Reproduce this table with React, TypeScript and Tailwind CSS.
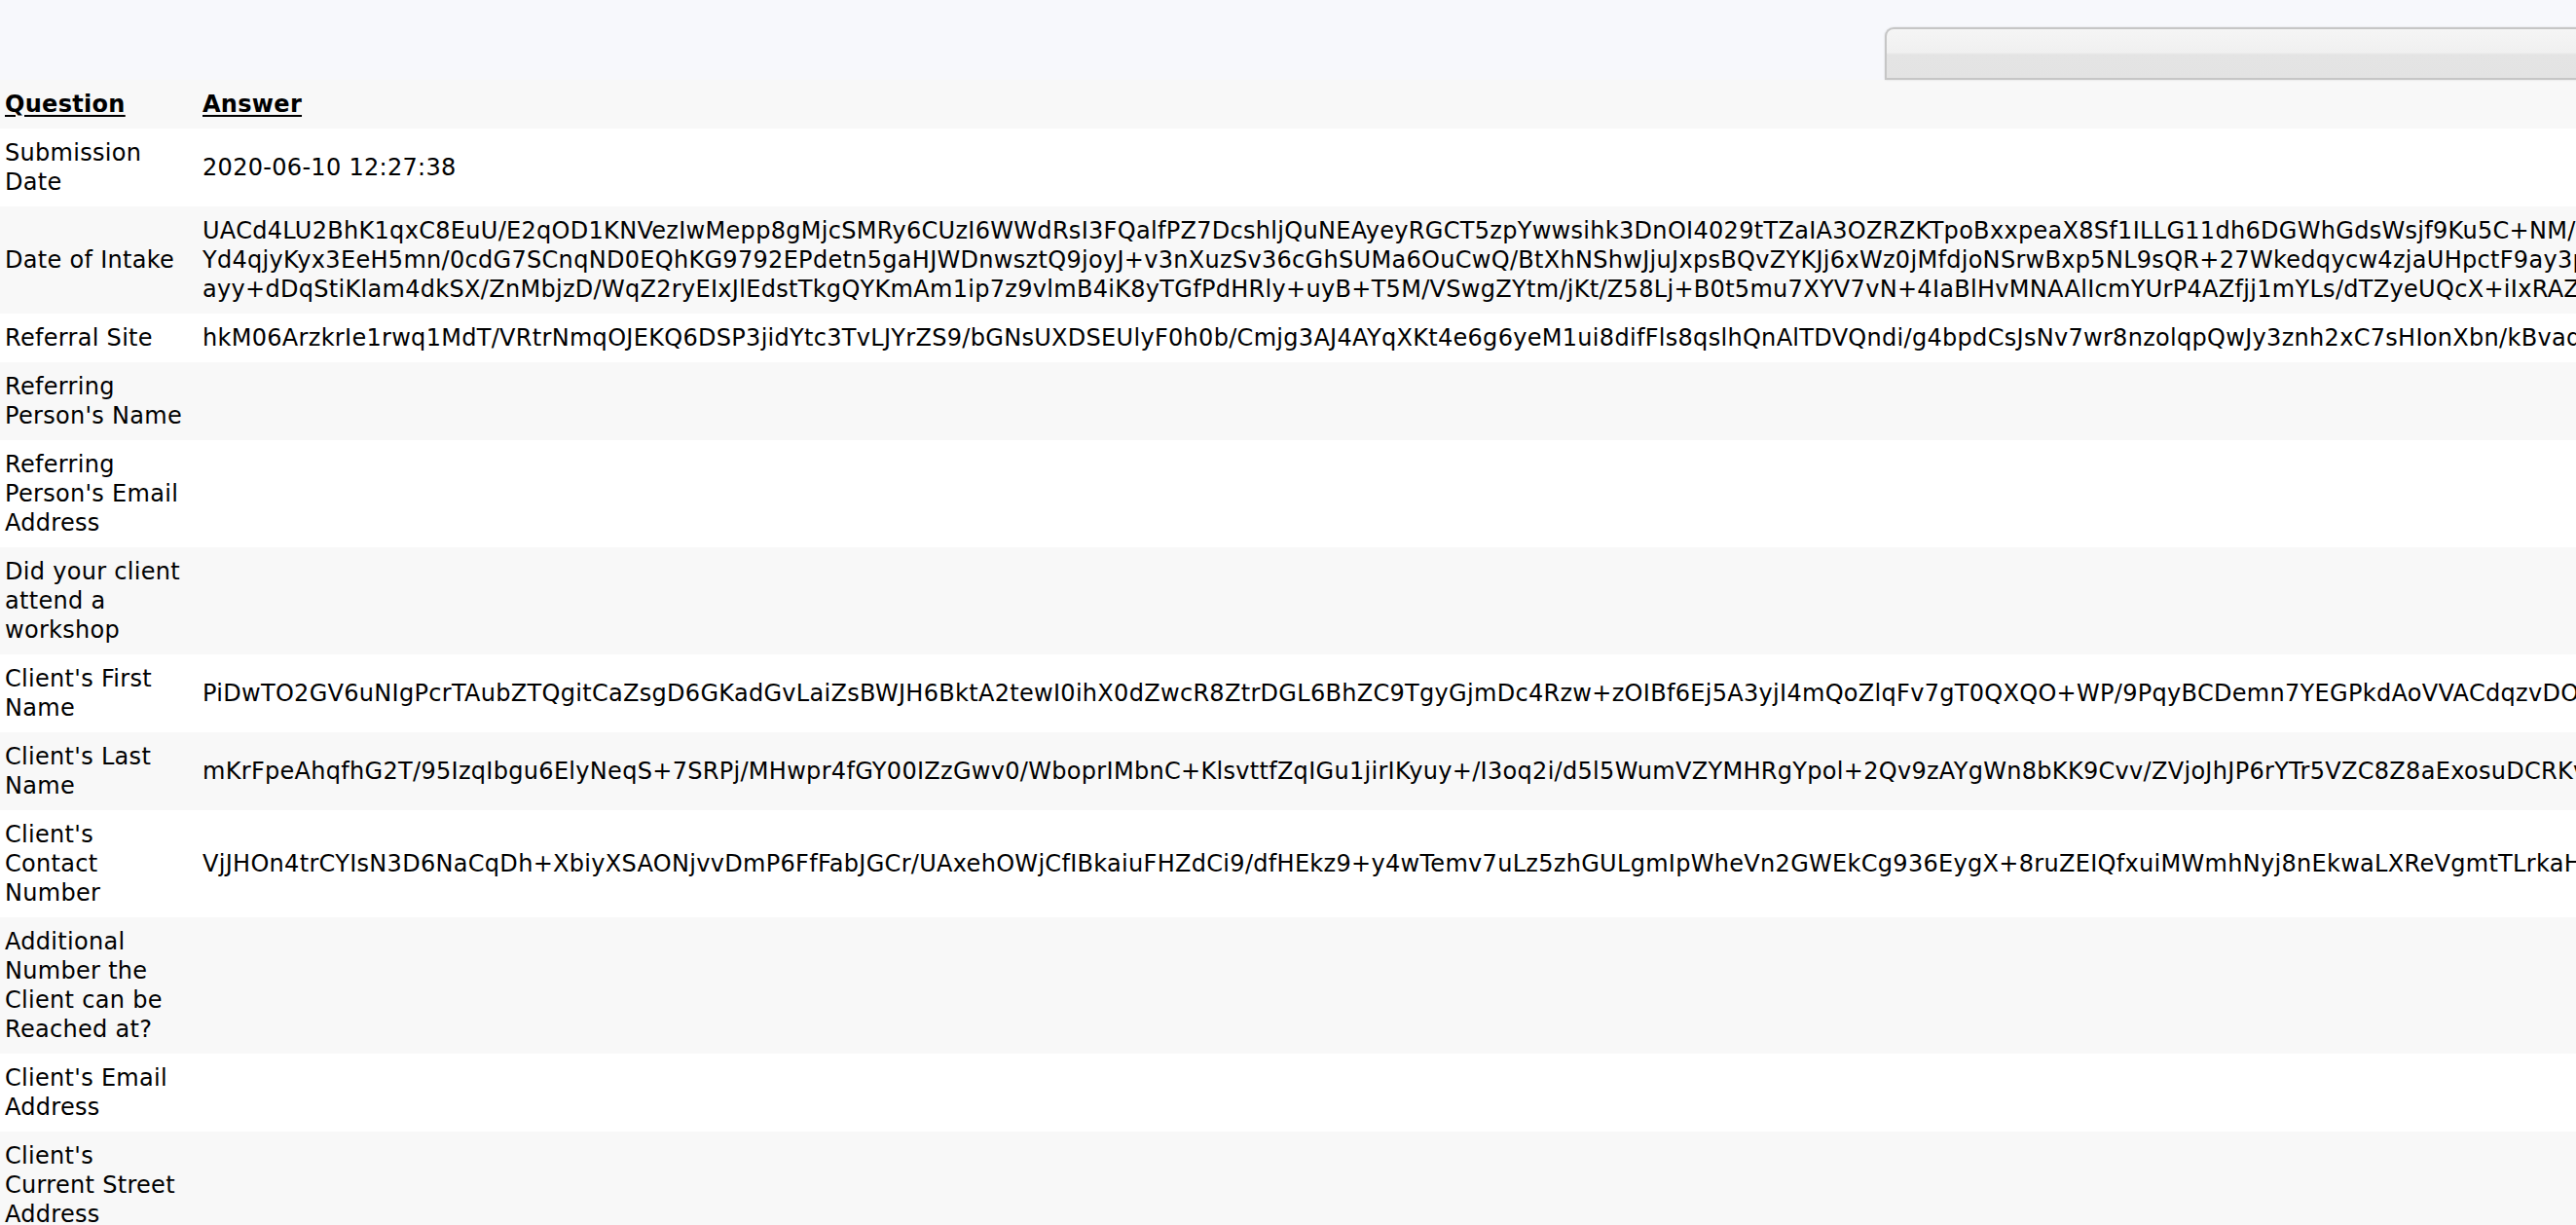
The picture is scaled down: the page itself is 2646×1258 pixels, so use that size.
import React from "react";

type Row = { q: string[]; a: string[]; gray: boolean };

const rows: Row[] = [
  { q: ["Submission", "Date"], a: ["2020-06-10 12:27:38"], gray: false },
  {
    q: ["Date of Intake"],
    a: [
      "UACd4LU2BhK1qxC8EuU/E2qOD1KNVezIwMepp8gMjcSMRy6CUzI6WWdRsI3FQalfPZ7DcshljQuNEAyeyRGCT5zpYwwsihk3DnOI4029tTZaIA3OZRZKTpoBxxpeaX8Sf1ILLG11dh6DGWhGdsWsjf9Ku5C+NM/8kQ2xLw",
      "Yd4qjyKyx3EeH5mn/0cdG7SCnqND0EQhKG9792EPdetn5gaHJWDnwsztQ9joyJ+v3nXuzSv36cGhSUMa6OuCwQ/BtXhNShwJjuJxpsBQvZYKJj6xWz0jMfdjoNSrwBxp5NL9sQR+27Wkedqycw4zjaUHpctF9ay3pRk2Vw",
      "ayy+dDqStiKlam4dkSX/ZnMbjzD/WqZ2ryEIxJlEdstTkgQYKmAm1ip7z9vlmB4iK8yTGfPdHRly+uyB+T5M/VSwgZYtm/jKt/Z58Lj+B0t5mu7XYV7vN+4IaBlHvMNAAlIcmYUrP4AZfjj1mYLs/dTZyeUQcX+iIxRAZ+Wq8Lm",
    ],
    gray: true,
  },
  {
    q: ["Referral Site"],
    a: [
      "hkM06ArzkrIe1rwq1MdT/VRtrNmqOJEKQ6DSP3jidYtc3TvLJYrZS9/bGNsUXDSEUlyF0h0b/Cmjg3AJ4AYqXKt4e6g6yeM1ui8difFls8qslhQnAlTDVQndi/g4bpdCsJsNv7wr8nzolqpQwJy3znh2xC7sHIonXbn/kBvaqT3sHw",
    ],
    gray: false,
  },
  { q: ["Referring", "Person's Name"], a: [], gray: true },
  { q: ["Referring", "Person's Email", "Address"], a: [], gray: false },
  { q: ["Did your client", "attend a", "workshop"], a: [], gray: true },
  {
    q: ["Client's First", "Name"],
    a: [
      "PiDwTO2GV6uNIgPcrTAubZTQgitCaZsgD6GKadGvLaiZsBWJH6BktA2tewI0ihX0dZwcR8ZtrDGL6BhZC9TgyGjmDc4Rzw+zOIBf6Ej5A3yjI4mQoZlqFv7gT0QXQO+WP/9PqyBCDemn7YEGPkdAoVVACdqzvDOaEk2Rt",
    ],
    gray: false,
  },
  {
    q: ["Client's Last", "Name"],
    a: [
      "mKrFpeAhqfhG2T/95IzqIbgu6ElyNeqS+7SRPj/MHwpr4fGY00IZzGwv0/WboprIMbnC+KlsvttfZqIGu1jirIKyuy+/I3oq2i/d5l5WumVZYMHRgYpol+2Qv9zAYgWn8bKK9Cvv/ZVjoJhJP6rYTr5VZC8Z8aExosuDCRKv3Pq",
    ],
    gray: true,
  },
  {
    q: ["Client's", "Contact", "Number"],
    a: [
      "VjJHOn4trCYIsN3D6NaCqDh+XbiyXSAONjvvDmP6FfFabJGCr/UAxehOWjCfIBkaiuFHZdCi9/dfHEkz9+y4wTemv7uLz5zhGULgmIpWheVn2GWEkCg936EygX+8ruZEIQfxuiMWmhNyj8nEkwaLXReVgmtTLrkaHvQ2nB",
    ],
    gray: false,
  },
  { q: ["Additional", "Number the", "Client can be", "Reached at?"], a: [], gray: true },
  { q: ["Client's Email", "Address"], a: [], gray: false },
  { q: ["Client's", "Current Street", "Address"], a: [], gray: true },
];

export default function App() {
  return (
    <div
      className="w-[2646px] h-[1258px] overflow-hidden bg-white text-black text-[24px] leading-[30px] tracking-[0.3px]"
      style={{ fontFamily: '"DejaVu Sans", Verdana, sans-serif' }}
    >
      {/* top bar */}
      <div className="h-[82px] bg-[#f7f8fc] flex">
        <div className="ml-[1936px] mt-[28px] h-[54px] w-[760px] shrink-0 rounded-tl-[9px] border-2 border-r-0 border-[#c6c6c6] shadow-[0_0_2px_rgba(0,0,0,0.15)] bg-[linear-gradient(to_bottom,#f5f5f5_0%,#f0f0f0_48%,#e4e4e4_52%,#e3e3e3_100%)]" />
      </div>

      {/* header row */}
      <div className="flex items-center h-[50px] bg-[#f8f8f8] font-bold">
        <div className="w-[208px] shrink-0 pl-[5px] underline underline-offset-[3px]">Question</div>
        <div className="underline underline-offset-[3px]">Answer</div>
      </div>

      {rows.map((r, i) => (
        <div
          key={i}
          className={`flex items-center py-[10px] ${r.gray ? "bg-[#f8f8f8]" : "bg-white"}`}
        >
          <div className="w-[208px] shrink-0 pl-[5px] whitespace-nowrap">
            {r.q.map((l, j) => (
              <div key={j}>{l}</div>
            ))}
          </div>
          <div className="whitespace-nowrap">
            {r.a.map((l, j) => (
              <div key={j}>{l}</div>
            ))}
          </div>
        </div>
      ))}
    </div>
  );
}
